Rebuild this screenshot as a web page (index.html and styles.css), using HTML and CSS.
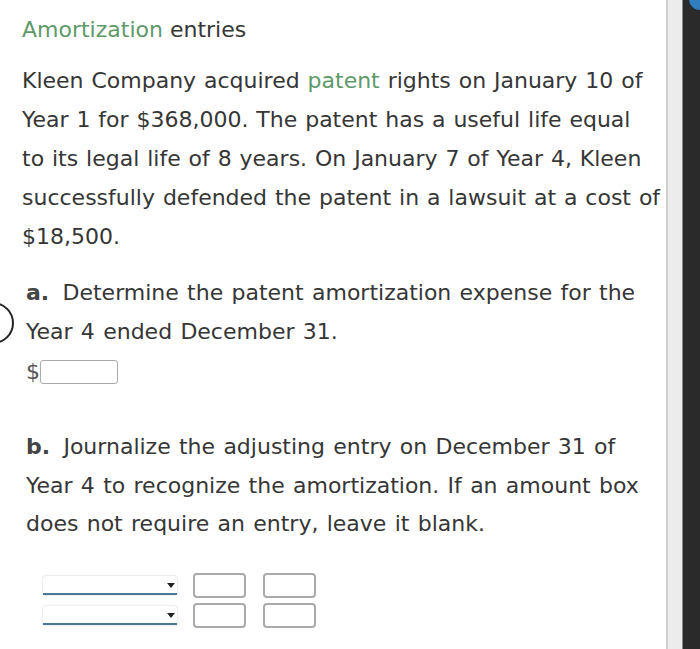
FILE: index.html
```html
<!DOCTYPE html>
<html>
<head>
<meta charset="utf-8">
<link rel="stylesheet" href="styles.css">
</head>
<body>
<div class="screen">
  <main class="main">
    <h1 class="title"><span class="green">Amortization</span> entries</h1>
    <p class="intro">Kleen Company acquired <span class="green">patent</span> rights on January 10 of<br>Year 1 for $368,000. The patent has a useful life equal<br>to its legal life of 8 years. On January 7 of Year 4, Kleen<br>successfully defended the patent in a lawsuit at a cost of<br>$18,500.</p>
    <section class="part part-a">
      <span class="ring"></span>
      <p class="q"><b>a.</b> Determine the patent amortization expense for the<br>Year 4 ended December 31.</p>
      <div class="amount"><span class="dollar">$</span><span class="box wide"></span></div>
    </section>
    <section class="part part-b">
      <p class="q"><b>b.</b> Journalize the adjusting entry on December 31 of<br>Year 4 to recognize the amortization. If an amount box<br>does not require an entry, leave it blank.</p>
      <div class="journal">
        <div class="jrow">
          <span class="select"><span class="caret"></span></span>
          <span class="box cell"></span>
          <span class="box cell"></span>
        </div>
        <div class="jrow">
          <span class="select"><span class="caret"></span></span>
          <span class="box cell"></span>
          <span class="box cell"></span>
        </div>
      </div>
    </section>
  </main>
  <div class="edge"></div>
  <div class="dark"><span class="blue"></span></div>
</div>
</body>
</html>
```
FILE: styles.css
```css
html, body {
  margin: 0;
  padding: 0;
  background: #fff;
}
.screen {
  display: flex;
  width: 700px;
  height: 649px;
  overflow: hidden;
}
.main {
  flex: 1;
  position: relative;
  padding: 15px 0 0 22px;
  font-family: "DejaVu Sans", Verdana, sans-serif;
  color: #363636;
  box-sizing: border-box;
}
.green { color: #5e9a68; }
.title {
  margin: 0;
  font-size: 22px;
  font-weight: normal;
  line-height: 30px;
}
.intro {
  margin: 16px 0 0 0;
  font-size: 22px;
  line-height: 39px;
  word-spacing: 0.9px;
  white-space: nowrap;
}
.part {
  position: relative;
  padding-left: 4px;
}
.part-a { margin-top: 18px; }
.q {
  margin: 0;
  font-size: 22px;
  line-height: 38.5px;
  word-spacing: 1.3px;
  white-space: nowrap;
}
.q b { color: #444; margin-right: 5px; }
.ring {
  position: absolute;
  left: -50px;
  top: 28px;
  width: 38px;
  height: 38px;
  border: 2.5px solid #222;
  border-radius: 50%;
}
.amount {
  display: flex;
  align-items: center;
  margin-top: 9px;
  font-size: 22px;
  line-height: 24px;
}
.dollar { color: #555; }
.box {
  display: block;
  border: 1px solid #aaa;
  border-radius: 3px;
  background: #fff;
  box-sizing: border-box;
}
.wide { width: 78px; height: 24px; }
.part-b { margin-top: 44px; }
.journal {
  display: flex;
  flex-direction: column;
  gap: 5px;
  margin: 29px 0 0 17px;
}
.jrow {
  display: flex;
  align-items: center;
  gap: 17px;
}
.select {
  position: relative;
  width: 134px;
  height: 17px;
  border-bottom: 2px solid #4d7594;
  box-shadow: 0 0 2px rgba(0,0,0,0.25);
  border-radius: 3px 3px 0 0;
  margin-right: -1px;
}
.caret {
  position: absolute;
  right: 2px;
  top: 7px;
  border-left: 4px solid transparent;
  border-right: 4px solid transparent;
  border-top: 5px solid #222;
}
.cell { width: 53px; height: 25px; border: 2px solid #aaa; border-radius: 4px; }
.edge {
  width: 14px;
  background: #ececec;
  border-left: 2px solid #cfcfcf;
  border-right: 1px solid #888;
}
.dark {
  width: 17px;
  background: #2a2a2a;
  position: relative;
}
.blue {
  position: absolute;
  left: 6px;
  top: -12px;
  width: 22px;
  height: 22px;
  border-radius: 50%;
  background: #2f7fc0;
}
```
